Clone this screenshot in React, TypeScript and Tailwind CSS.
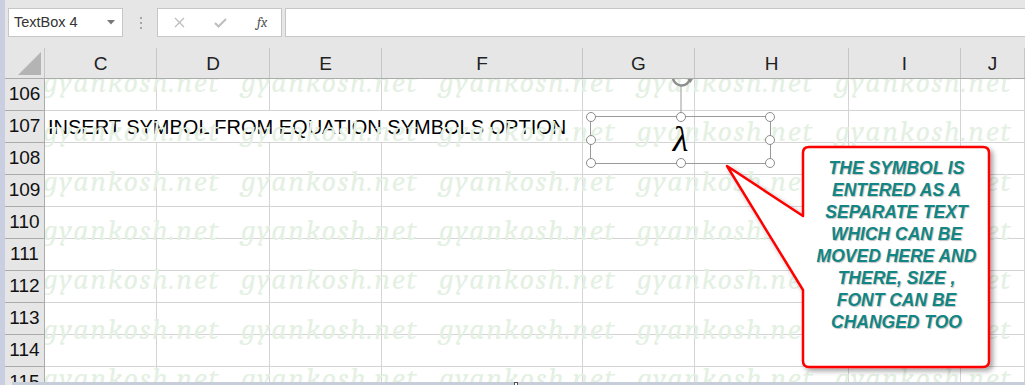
import React from 'react';

const columns = [
  { label: 'C', width: 'w-[112px]' },
  { label: 'D', width: 'w-[113px]' },
  { label: 'E', width: 'w-[112px]' },
  { label: 'F', width: 'w-[201px]' },
  { label: 'G', width: 'w-[112px]' },
  { label: 'H', width: 'w-[154px]' },
  { label: 'I', width: 'w-[112px]' },
  { label: 'J', width: 'flex-1' },
];

const rows = [106, 107, 108, 109, 110, 111, 112, 113, 114, 115];

const calloutLines = [
  'THE SYMBOL IS',
  'ENTERED AS A',
  'SEPARATE TEXT',
  'WHICH CAN BE',
  'MOVED HERE AND',
  'THERE, SIZE ,',
  'FONT CAN BE',
  'CHANGED TOO',
];

function FormulaBar() {
  return (
    <div className="flex h-[44px] shrink-0 items-start bg-[#e6e6e6] pt-[8px] pl-[3px]">
      <div className="flex h-[29px] w-[115px] shrink-0 items-center border border-[#c6c6c6] bg-white pl-[5px] text-[14.5px] text-[#333]">
        TextBox 4
        <svg className="ml-auto mr-[7px]" width="8" height="5" viewBox="0 0 8 5">
          <path d="M0 0 H8 L4 4.5 Z" fill="#777" />
        </svg>
      </div>
      <div className="ml-[16px] flex h-[29px] w-[3px] flex-col items-center justify-center gap-[3px]">
        <span className="h-[2px] w-[2px] bg-[#a6a6a6]" />
        <span className="h-[2px] w-[2px] bg-[#a6a6a6]" />
        <span className="h-[2px] w-[2px] bg-[#a6a6a6]" />
      </div>
      <div className="ml-[15px] flex h-[29px] w-[125px] shrink-0 items-center border border-[#c6c6c6] bg-white">
        <svg className="ml-[16px]" width="11" height="11" viewBox="0 0 11 11">
          <path d="M1 1 L10 10 M10 1 L1 10" stroke="#bdbdbd" strokeWidth="1.3" />
        </svg>
        <svg className="ml-[29px]" width="13" height="10" viewBox="0 0 13 10">
          <path d="M1 5 L4.5 8.5 L12 1" stroke="#bdbdbd" strokeWidth="2" fill="none" />
        </svg>
        <span className="ml-[30px] font-serif text-[14px] italic text-[#555]">fx</span>
      </div>
      <div className="ml-[3px] mr-[-10px] h-[29px] flex-1 border border-[#c6c6c6] bg-white" />
    </div>
  );
}

function HeaderRow() {
  return (
    <div className="flex h-[35px] shrink-0 border-b border-[#ababab] bg-[#e6e6e6]">
      <div className="relative h-[30px] w-[40px] shrink-0 self-end border-r border-[#c6c6c6]">
        <svg className="absolute left-[13px] top-[4px]" width="23" height="23" viewBox="0 0 23 23">
          <path d="M0 23 H23 V0 Z" fill="#b4b4b4" />
        </svg>
      </div>
      {columns.map((col) => (
        <div
          key={col.label}
          className={`${col.width} flex h-[30px] shrink-0 items-center justify-center self-end border-r border-[#c6c6c6] pt-[3px] text-[19px] text-[#222]`}
        >
          {col.label}
        </div>
      ))}
    </div>
  );
}

function SheetRow({ num }: { num: number }) {
  return (
    <div className="flex h-[32px] shrink-0">
      <div className="flex w-[40px] shrink-0 items-center justify-center border-r border-b border-[#ababab] bg-[#e6e6e6] text-[19px] text-[#111]">
        {num}
      </div>
      {num === 107 ? (
        <>
          <div className="flex w-[538px] shrink-0 items-center overflow-visible whitespace-nowrap border-r border-b border-[#d4d4d4] pl-[3px] text-[20px] text-black">
            INSERT SYMBOL FROM EQUATION SYMBOLS OPTION
          </div>
          {columns.slice(4).map((col) => (
            <div key={col.label} className={`${col.width} shrink-0 border-r border-b border-[#d4d4d4]`} />
          ))}
        </>
      ) : (
        columns.map((col) => (
          <div key={col.label} className={`${col.width} shrink-0 border-r border-b border-[#d4d4d4]`} />
        ))
      )}
    </div>
  );
}

function Watermark() {
  return (
    <div className="pointer-events-none absolute left-[45px] right-0 top-[79px] bottom-0 overflow-hidden">
      <div className="-ml-[2px] -mt-[21px] flex flex-col">
        {[0, 1, 2, 3, 4, 5, 6].map((r) => (
          <div key={r} className="flex h-[49.3px] shrink-0 items-center">
            {[0, 1, 2, 3, 4, 5].map((c) => (
              <span
                key={c}
                className="w-[198px] shrink-0 whitespace-nowrap font-serif text-[30px] italic tracking-[1.5px] text-[#e3f0e2]"
              >
                gyankosh.net
              </span>
            ))}
          </div>
        ))}
      </div>
    </div>
  );
}

function Handle({ className }: { className: string }) {
  return <span className={`absolute h-[10px] w-[10px] -translate-x-1/2 -translate-y-1/2 rounded-full border-[1.5px] border-[#8c8c8c] bg-white ${className}`} />;
}

function TextBoxShape() {
  return (
    <>
      <svg className="absolute left-[668px] top-[79px]" width="28" height="37" viewBox="0 0 28 37">
        <path d="M5 -3 A 8.5 8.5 0 1 0 22 -1" stroke="#8c8c8c" strokeWidth="2.4" fill="none" />
        <path d="M18 -2 L26 -2 L22.5 4 Z" fill="#8c8c8c" />
        <path d="M13 7 V37" stroke="#9a9a9a" strokeWidth="1" />
      </svg>
      <div className="absolute left-[590px] top-[116px] flex h-[48px] w-[181px] items-center justify-center border border-[#9a9a9a]">
        <span className="font-serif text-[36px] leading-none italic text-black">λ</span>
        <Handle className="left-0 top-0" />
        <Handle className="left-1/2 top-0" />
        <Handle className="left-full top-0" />
        <Handle className="left-0 top-1/2" />
        <Handle className="left-full top-1/2" />
        <Handle className="left-0 top-full" />
        <Handle className="left-1/2 top-full" />
        <Handle className="left-full top-full" />
      </div>
    </>
  );
}

function Callout() {
  return (
    <>
      <svg className="absolute left-[720px] top-[140px]" width="290" height="240" viewBox="0 0 290 240">
        <defs>
          <filter id="shadow" x="-10%" y="-10%" width="130%" height="130%">
            <feDropShadow dx="3" dy="3" stdDeviation="2.5" floodColor="#000" floodOpacity="0.35" />
          </filter>
        </defs>
        <path
          d="M89 7 H263 Q269 7 269 13 V221 Q269 227 263 227 H89 Q83 227 83 221 V150 L7 26 L83 76 V13 Q83 7 89 7 Z"
          fill="#fff"
          stroke="#ff0000"
          strokeWidth="2.5"
          strokeLinejoin="round"
          filter="url(#shadow)"
        />
      </svg>
      <div className="absolute left-[803px] top-[147px] flex h-[220px] w-[187px] flex-col items-center pt-[10px] text-center text-[17.5px] leading-[22px] font-bold italic text-[#128585] [text-shadow:1px_1px_1px_rgba(0,0,0,0.25)]">
        {calloutLines.map((line) => (
          <div key={line} className="whitespace-nowrap">
            {line}
          </div>
        ))}
      </div>
    </>
  );
}

export default function App() {
  return (
    <div className="relative h-[385px] w-[1025px] overflow-hidden bg-white font-['Liberation_Sans',Arial,sans-serif]">
      <div className="flex h-full">
        <div className="w-[5px] shrink-0 bg-[#c9cfe0]" />
        <div className="flex min-w-0 flex-1 flex-col">
          <FormulaBar />
          <HeaderRow />
          <div className="flex flex-1 flex-col overflow-hidden">
            {rows.map((n) => (
              <SheetRow key={n} num={n} />
            ))}
          </div>
        </div>
      </div>

      <Watermark />
      <TextBoxShape />
      <Callout />

      <div className="absolute bottom-0 left-[12px] right-0 h-[3px] bg-[#c7cdd9]" />
      <div className="absolute bottom-0 left-[514px] h-[3px] w-[4px] border border-b-0 border-[#555] bg-white" />
    </div>
  );
}
